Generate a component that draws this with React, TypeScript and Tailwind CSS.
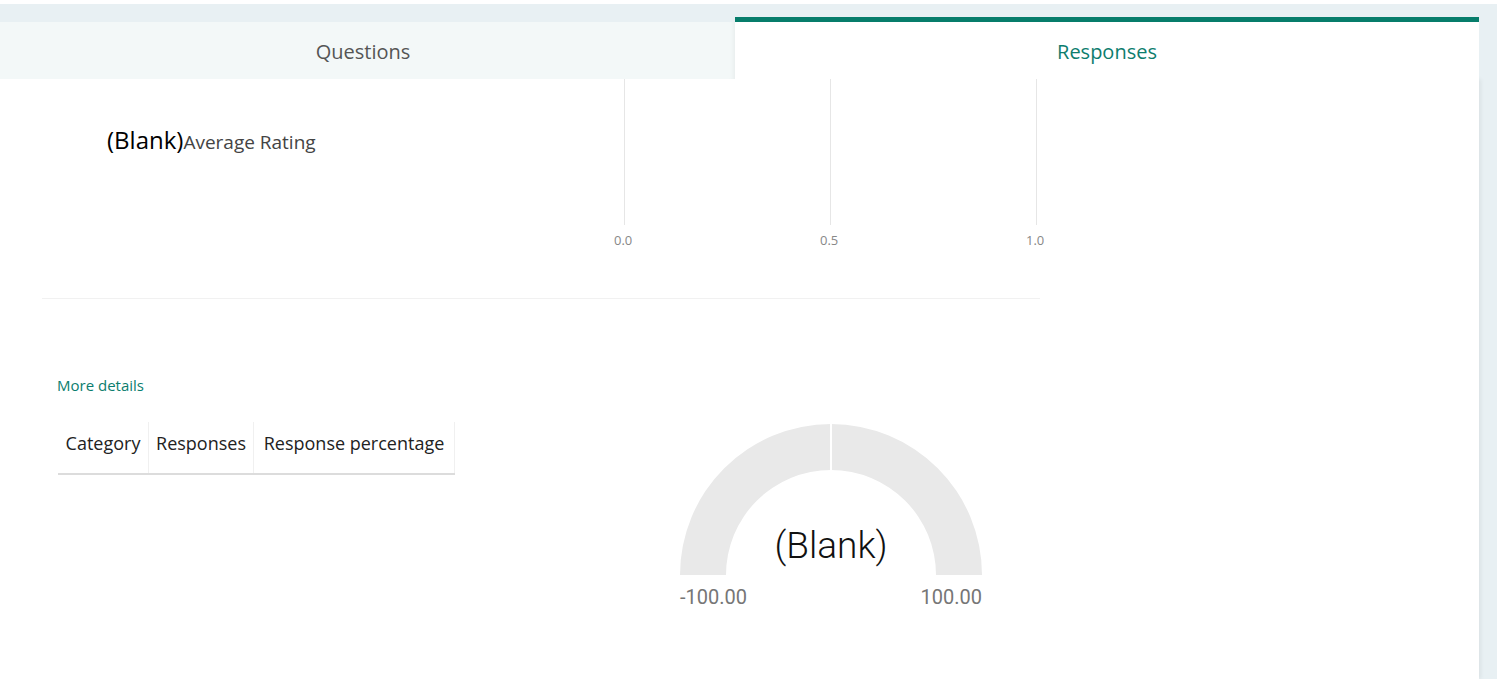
import React from "react";

const font = { fontFamily: '"Open Sans", "Noto Sans", sans-serif' };

function Gauge() {
  const R = 151;
  const r = 105;
  const cx = 151;
  const cy = 151;
  const d = `M ${cx - R} ${cy} A ${R} ${R} 0 0 1 ${cx + R} ${cy} L ${cx + r} ${cy} A ${r} ${r} 0 0 0 ${cx - r} ${cy} Z`;
  return (
    <div className="relative w-[302px]">
      <svg width="302" height="151" viewBox="0 0 302 151" className="block">
        <path d={d} fill="#e9e9e9" />
        <rect x="150" y="0" width="2" height="48" fill="#ffffff" />
      </svg>
      <div
        className="absolute left-0 right-0 top-[98px] text-center text-[37px] leading-[48px] font-light text-[#111]"
        style={{ fontFamily: '"Roboto", "DejaVu Sans", sans-serif' }}
      >
        (Blank)
      </div>
      <div className="flex justify-between pt-[3px] text-[20px] leading-[38px] text-[#767676]" style={{ fontFamily: '"Roboto", sans-serif' }}>
        <span>-100.00</span>
        <span>100.00</span>
      </div>
    </div>
  );
}

export default function App() {
  return (
    <div className="w-[1497px] h-[679px] bg-white overflow-hidden" style={font}>
      <div className="mt-[4px] h-[675px] bg-[#e8f0f3] flex flex-col pr-[18px]">
        {/* Tabs */}
        <div className="flex h-[75px] shrink-0 relative z-10">
          <div className="w-[735px] mt-[18px] h-[57px] bg-[#f3f8f8] flex items-center justify-center pt-[3px] pr-[9px] text-[20px] text-[#555] shadow-[inset_-6px_0_6px_-6px_rgba(0,0,0,0.08)]">
            Questions
          </div>
          <div className="flex-1 mt-[13px] h-[62px] bg-white border-t-[5px] border-[#077d6b] flex items-center justify-center pt-[3px] text-[20px] text-[#0d7d6e]">
            Responses
          </div>
        </div>
        {/* Content */}
        <div className="flex-1 bg-white shadow-[2px_0_4px_rgba(0,0,0,0.06)]">
          {/* Bar chart */}
          <div className="ml-[42px] w-[998px] h-[220px] border-b border-[#f1f1f1] flex">
            <div className="w-[582px] pl-[65px] pt-[43px] flex items-baseline">
              <span className="text-[24px] text-black">(Blank)</span>
              <span className="text-[19px] text-[#444]">Average Rating</span>
            </div>
            <div className="w-[413px] flex flex-col">
              <div className="h-[146px] flex justify-between">
                <div className="w-px bg-[#e6e6e6]" />
                <div className="w-px bg-[#e6e6e6]" />
                <div className="w-px bg-[#e6e6e6]" />
              </div>
              <div className="relative h-[30px] text-[13px] text-[#888]">
                <span className="absolute left-[-10px] top-[6px]">0.0</span>
                <span className="absolute left-[196px] top-[6px]">0.5</span>
                <span className="absolute left-[402px] top-[6px]">1.0</span>
              </div>
            </div>
          </div>
          {/* Lower section */}
          <div className="flex">
            <div className="w-[680px] pl-[57px] pt-[76px]">
              <div className="text-[15px] leading-[20px] text-[#0b7d6e]">More details</div>
              <div className="mt-[27px] ml-[1px] flex w-[397px] h-[53px] border-b-2 border-[#dcdcdc] text-[18px] leading-[26px] text-[#222]">
                <div className="w-[91px] flex justify-center pt-[8px] border-r border-[#f0f0f0]">Category</div>
                <div className="w-[105px] flex justify-center pt-[8px] border-r border-[#f0f0f0]">Responses</div>
                <div className="flex-1 flex justify-center pt-[8px] border-r border-[#f0f0f0]">Response percentage</div>
              </div>
            </div>
            <div className="pt-[125px]">
              <Gauge />
            </div>
          </div>
        </div>
      </div>
    </div>
  );
}
